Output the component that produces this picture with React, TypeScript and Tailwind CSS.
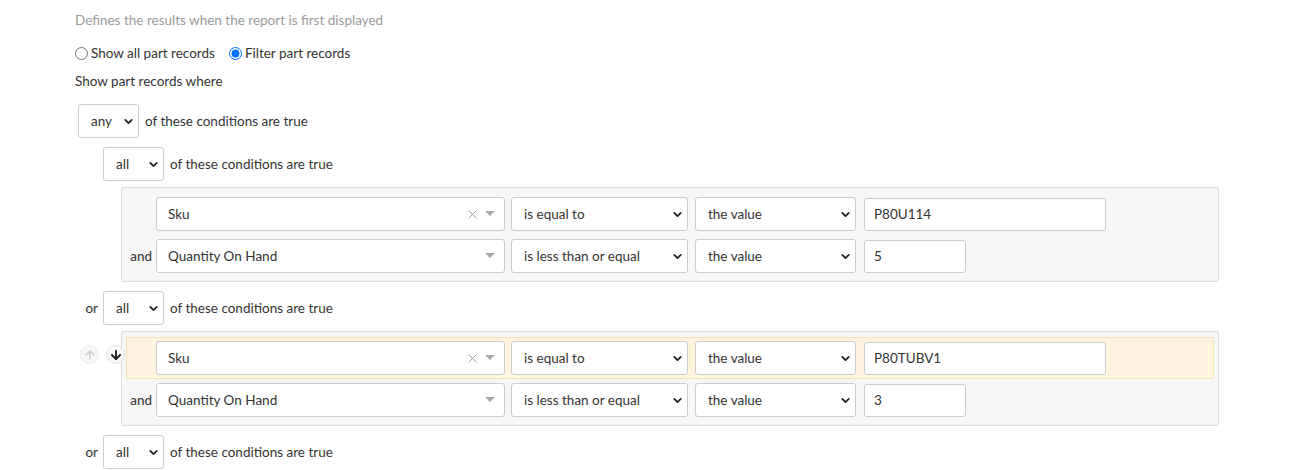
import { ArrowDown, ArrowUp, ChevronDown, X } from 'lucide-react'

type Cond = { field: string; op: string; kind: string; value: string; clearable: boolean; wide: boolean }

const groups: { joiner?: string; mode: string; highlight?: boolean; conds: Cond[] }[] = [
  {
    mode: 'all',
    conds: [
      { field: 'Sku', op: 'is equal to', kind: 'the value', value: 'P80U114', clearable: true, wide: true },
      { field: 'Quantity On Hand', op: 'is less than or equal', kind: 'the value', value: '5', clearable: false, wide: false },
    ],
  },
  {
    joiner: 'or',
    mode: 'all',
    highlight: true,
    conds: [
      { field: 'Sku', op: 'is equal to', kind: 'the value', value: 'P80TUBV1', clearable: true, wide: true },
      { field: 'Quantity On Hand', op: 'is less than or equal', kind: 'the value', value: '3', clearable: false, wide: false },
    ],
  },
]

function NativeSelect({ label, className }: { label: string; className: string }) {
  return (
    <div
      className={`flex h-[34px] items-center justify-between rounded-[3px] border border-[#cccccc] bg-white pl-[12px] pr-[3px] text-[13.5px] text-[#333] ${className}`}
    >
      <span>{label}</span>
      <ChevronDown size={13} strokeWidth={3.4} className="text-[#222]" />
    </div>
  )
}

function FieldSelect({ label, clearable }: { label: string; clearable: boolean }) {
  return (
    <div className="flex h-[34px] w-[349px] items-center rounded-[3px] border border-[#cccccc] bg-white pl-[11px] pr-[9px] text-[13.5px] text-[#333]">
      <span className="flex-1">{label}</span>
      {clearable && <X size={15} strokeWidth={1.5} className="mr-[5px] text-[#999]" />}
      <svg width="10" height="6" viewBox="0 0 10 6" className="text-[#aaa]">
        <path d="M0 0h10L5 5z" fill="currentColor" />
      </svg>
    </div>
  )
}

function Row({ c, first, highlight }: { c: Cond; first: boolean; highlight: boolean }) {
  return (
    <div
      className={`relative flex items-center rounded-[2px] border py-[3px] ${
        highlight ? 'border-[#f6e2b6] bg-[#fff4dd]' : 'border-transparent'
      }`}
    >
      {highlight && (
        <>
          <span className="absolute left-[-47px] top-[7px] flex h-[19px] w-[19px] items-center justify-center rounded-full border border-[#ececec] bg-[#f6f6f6]">
            <ArrowUp size={14} strokeWidth={2.6} className="text-[#cfcfcf]" />
          </span>
          <span className="absolute left-[-21px] top-[7px] flex h-[19px] w-[19px] items-center justify-center rounded-full border border-[#e2e2e2] bg-[#f8f8f8]">
            <ArrowDown size={14} strokeWidth={3.2} className="text-[#1a1a1a]" />
          </span>
        </>
      )}
      <div className="w-[29px] pr-[4px] text-right text-[13.5px] text-[#333]">{first ? '' : 'and'}</div>
      <FieldSelect label={c.field} clearable={c.clearable} />
      <NativeSelect label={c.op} className="ml-[6px] w-[177px]" />
      <NativeSelect label={c.kind} className="ml-[7px] w-[161px]" />
      <div
        className={`ml-[8px] flex h-[33px] items-center rounded-[3px] border border-[#cccccc] bg-white pl-[9px] text-[13.5px] text-[#333] ${
          c.wide ? 'w-[242px]' : 'w-[102px]'
        }`}
      >
        {c.value}
      </div>
    </div>
  )
}

export default function App() {
  return (
    <div className="min-h-[470px] bg-white pl-[75px] pt-[11px] font-['Lato','Liberation_Sans',sans-serif] text-[13.5px] text-[#333]">
      <p className="leading-[18px] text-[#9a9a9a]">Defines the results when the report is first displayed</p>

      <div className="mt-[15px] flex h-[18px] items-center">
        <label className="flex items-center">
          <input type="radio" name="mode" className="m-0 h-[13px] w-[13px]" />
          <span className="ml-[3px]">Show all part records</span>
        </label>
        <label className="ml-[14px] flex items-center">
          <input type="radio" name="mode" defaultChecked className="m-0 h-[13px] w-[13px]" />
          <span className="ml-[3px]">Filter part records</span>
        </label>
      </div>

      <p className="mt-[10px] leading-[18px]">Show part records where</p>

      <div className="ml-[3px] mt-[14px]">
        <div className="flex items-center">
          <NativeSelect label="any" className="w-[61px]" />
          <span className="ml-[6px]">of these conditions are true</span>
        </div>

        {groups.map((g, gi) => (
          <div key={gi} className="mt-[9px]">
            <div className="flex items-center">
              <div className="w-[25px] pr-[5px] text-right">{g.joiner ?? ''}</div>
              <NativeSelect label={g.mode} className="w-[61px]" />
              <span className="ml-[6px]">of these conditions are true</span>
            </div>
            <div className="ml-[43px] mt-[6px] w-[1098px] rounded-[2px] border border-[#dedede] bg-[#f6f6f7] px-[4px] pb-[4px] pt-[5px]">
              {g.conds.map((c, ci) => (
                <Row key={ci} c={c} first={ci === 0} highlight={!!g.highlight && ci === 0} />
              ))}
            </div>
          </div>
        ))}

        <div className="mt-[9px] flex items-center">
          <div className="w-[25px] pr-[5px] text-right">or</div>
          <NativeSelect label="all" className="w-[61px]" />
          <span className="ml-[6px]">of these conditions are true</span>
        </div>
      </div>
    </div>
  )
}
